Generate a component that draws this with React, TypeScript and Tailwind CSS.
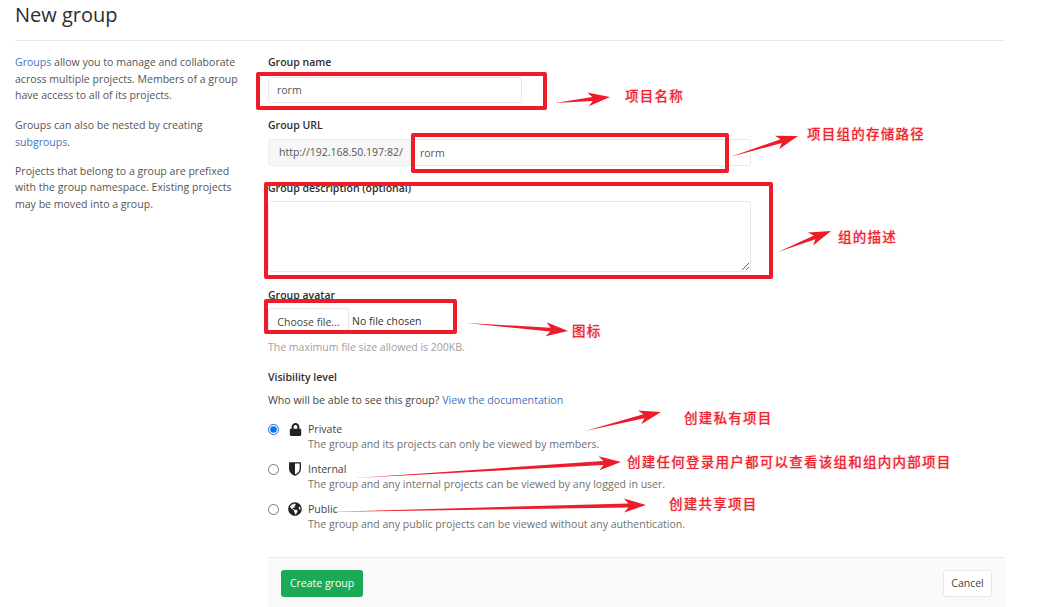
import React from "react";
import { FaLock, FaGlobeAmericas } from "react-icons/fa";

const sans = "font-['Open_Sans','Noto_Sans',sans-serif]";
const labelCls = "block text-[10.5px] font-semibold leading-[14px] text-[#2e2e2e]";

function Shield() {
  return (
    <svg width="12" height="14" viewBox="0 0 12 14" aria-hidden="true">
      <path d="M.7.9h10.6v6c0 3-2.6 5-5.3 6.3C3.300 11.900.7 9.900.7 6.900z" fill="#fff" stroke="#222" strokeWidth="1.300" />
      <path d="M.7.9H6v12.300C3.300 11.900.7 9.900.7 6.900z" fill="#222" />
    </svg>
  );
}

function Option({ title, desc, icon, checked, cls }: { title: string; desc: string; icon: React.ReactNode; checked?: boolean; cls: string }) {
  return (
    <div className={"flex " + cls}>
      <input type="radio" name="visibility" defaultChecked={checked} className="mt-[2px] h-[11px] w-[11px] shrink-0 accent-[#0f6fec]" />
      <div className="ml-[6px] flex h-[14px] w-[20px] shrink-0 items-center justify-center">{icon}</div>
      <div className="ml-[3px] text-[10.55px] leading-[15px]">
        <div className="text-[#444]">{title}</div>
        <div className="text-[#6f6f6f]">{desc}</div>
      </div>
    </div>
  );
}

function Box({ cls }: { cls: string }) {
  return <div className={"pointer-events-none absolute rounded-[2px] border-[4px] border-[#ee1c2b] " + cls} />;
}

function Note({ text, cls }: { text: string; cls: string }) {
  return (
    <span className={"absolute whitespace-nowrap font-['Noto_Sans_CJK_SC',sans-serif] text-[13.5px] font-medium leading-[18px] tracking-[1.25px] text-[#ee2430] [text-shadow:0_0_2px_rgba(238,36,48,0.35)] " + cls}>
      {text}
    </span>
  );
}

function arrow(x1: number, y1: number, x2: number, y2: number, head = 22, hw = 7, sw = 2) {
  const dx = x2 - x1, dy = y2 - y1;
  const l = Math.hypot(dx, dy);
  const ux = dx / l, uy = dy / l, nx = -uy, ny = ux;
  const bx = x2 - ux * head, by = y2 - uy * head;
  const nb = x2 - ux * head * 0.8, mb = y2 - uy * head * 0.8;
  const p = [
    [x1, y1],
    [nb + nx * sw, mb + ny * sw],
    [bx + nx * hw, by + ny * hw],
    [x2, y2],
    [bx - nx * hw, by - ny * hw],
    [nb - nx * sw, mb - ny * sw],
  ];
  return p.map((q) => q.join(",")).join(" ");
}

const arrows = [
  [555, 103, 610, 97],
  [730, 157, 798, 136],
  [778, 252, 831, 231],
  [466, 323, 568, 331],
  [585, 431, 661, 412],
  [355, 478, 621, 462],
  [325, 512, 646, 505],
];

export default function App() {
  return (
    <div className={"relative h-[607px] w-[1051px] overflow-hidden bg-white " + sans}>
      <div className="ml-[15px] w-[990px]">
        <h1 className="h-[41px] border-b border-[#e8e8e8] pt-[2px] text-[20px] font-normal leading-[26px] text-[#2e2e2e]">New group</h1>
        <div className="flex">
          <div className="w-[253px] shrink-0 pt-[13px] text-[10.55px] leading-[16.7px] text-[#555]">
            <p className="w-[228px]">
              <span className="text-[#3f73bd]">Groups</span> allow you to manage and collaborate across multiple projects. Members of a group have access to all of its projects.
            </p>
            <p className="mt-[13px] w-[228px]">
              Groups can also be nested by creating <span className="text-[#3f73bd]">subgroups</span>.
            </p>
            <p className="mt-[12px] w-[228px]">
              Projects that belong to a group are prefixed with the group namespace. Existing projects may be moved into a group.
            </p>
          </div>
          <div className="flex-1">
            <label className={labelCls + " mt-[14px]"}>Group name</label>
            <input defaultValue="rorm" className="mt-[8px] block h-[26px] w-[254px] rounded-[3px] border border-[#e8e8e8] bg-white px-[8px] text-[10.5px] text-[#555] outline-none" />
            <label className={labelCls + " mt-[15px]"}>Group URL</label>
            <div className="mt-[7px] flex h-[27px] w-[483px]">
              <div className="flex w-[143px] items-center rounded-l-[3px] border border-[#ececec] bg-[#f7f7f7] pl-[10px] text-[10.5px] text-[#555]">http://192.168.50.197:82/</div>
              <input defaultValue="rorm" className="min-w-0 flex-1 rounded-r-[3px] border border-l-0 border-[#e8e8e8] bg-white px-[9px] pt-[2px] text-[10.5px] text-[#555] outline-none" />
            </div>
            <label className={labelCls + " mt-[15px]"}>Group description (optional)</label>
            <textarea className="mt-[6px] block h-[71px] w-[483px] rounded-[3px] border border-[#e8e8e8] bg-white outline-none" />
            <label className={labelCls + " mt-[16px]"}>Group avatar</label>
            <div className="mt-[6px] flex h-[25px] items-center">
              <button className="h-[25px] w-[81px] rounded-[3px] border border-[#e8e8e8] bg-white pt-[5px] text-center text-[10.5px] text-[#444]">Choose file...</button>
              <span className="ml-[3px] pt-[3px] text-[10.5px] text-[#333]">No file chosen</span>
            </div>
            <p className="mt-[7px] text-[10.5px] leading-[14px] text-[#a0a0a0]">The maximum file size allowed is 200KB.</p>
            <label className={labelCls + " mt-[16px]"}>Visibility level</label>
            <p className="mt-[9px] text-[10.65px] leading-[14px] text-[#444]">
              Who will be able to see this group? <span className="text-[#3f73bd]">View the documentation</span>
            </p>
            <Option cls="mt-[15px]" checked title="Private" desc="The group and its projects can only be viewed by members." icon={<FaLock className="text-[13px] text-[#222]" />} />
            <Option cls="mt-[10px]" title="Internal" desc="The group and any internal projects can be viewed by any logged in user." icon={<Shield />} />
            <Option cls="mt-[10px]" title="Public" desc="The group and any public projects can be viewed without any authentication." icon={<FaGlobeAmericas className="text-[14px] text-[#222]" />} />
            <div className="mt-[25px] flex h-[60px] items-start justify-between border-t border-[#e8e8e8] bg-[#fafafa] px-[13px] pt-[12px]">
              <button className="h-[27px] w-[82px] rounded-[3px] bg-[#1aaa55] pt-[1px] text-[10.5px] text-white">Create group</button>
              <button className="h-[27px] w-[49px] rounded-[3px] border border-[#e8e8e8] bg-white pt-[1px] text-[10.5px] text-[#444]">Cancel</button>
            </div>
          </div>
        </div>
      </div>

      <Box cls="left-[256px] top-[72px] h-[38px] w-[291px]" />
      <Box cls="left-[411px] top-[133px] h-[40px] w-[318px]" />
      <Box cls="left-[264px] top-[182px] h-[97px] w-[509px]" />
      <Box cls="left-[264px] top-[299px] h-[35px] w-[193px]" />

      <svg className="pointer-events-none absolute left-0 top-0" width="1051" height="607" aria-hidden="true">
        {arrows.map((a, i) => (
          <polygon key={i} points={arrow(a[0], a[1], a[2], a[3])} fill="#ee1c2b" />
        ))}
      </svg>

      <Note text="项目名称" cls="left-[625px] top-[86px]" />
      <Note text="项目组的存储路径" cls="left-[807px] top-[124px]" />
      <Note text="组的描述" cls="left-[838px] top-[227px]" />
      <Note text="图标" cls="left-[572px] top-[321px]" />
      <Note text="创建私有项目" cls="left-[684px] top-[408px]" />
      <Note text="创建任何登录用户都可以查看该组和组内内部项目" cls="left-[627px] top-[452px]" />
      <Note text="创建共享项目" cls="left-[669px] top-[494px]" />
    </div>
  );
}
